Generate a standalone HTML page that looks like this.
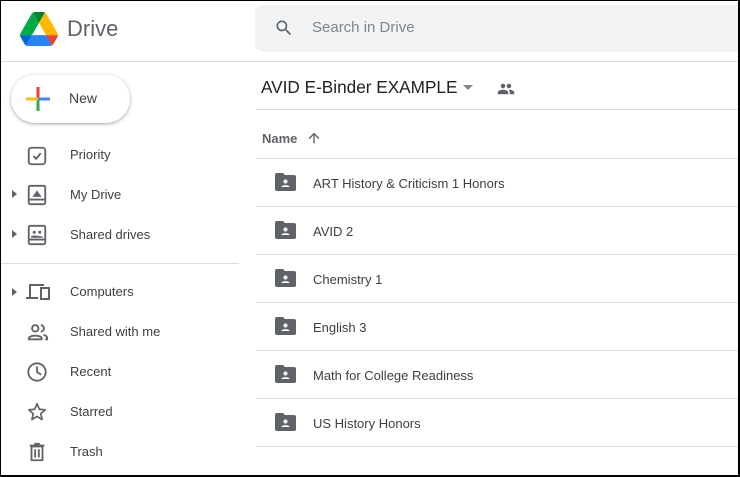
<!DOCTYPE html>
<html><head><meta charset="utf-8"><style>
*{margin:0;padding:0;box-sizing:border-box}
body{width:740px;height:477px;overflow:hidden;background:#fff;font-family:"Liberation Sans",Arial,sans-serif;position:relative}
.frame{position:absolute;left:0;top:0;width:740px;height:477px;border-left:1px solid #000;border-top:1px solid #000;border-right:2px solid #000;border-bottom:2px solid #000;pointer-events:none;z-index:10}
.abs{position:absolute}
.hline{position:absolute;height:1px;background:#dadce0}
.nav{position:absolute;left:70px;font-size:13px;color:#3c4043}
.ic{position:absolute;left:26px}
.tri{position:absolute;left:12px;width:0;height:0;border-top:4px solid transparent;border-bottom:4px solid transparent;border-left:5px solid #5f6368}
.row{position:absolute;left:313px;font-size:13px;color:#3c4043}
.fold{position:absolute;left:275px}
</style></head><body>
<div class="frame"></div>
<svg class="abs" style="left:20px;top:12px" width="38" height="34" viewBox="0 0 87.3 78"><path d="m6.6 66.85 3.850 6.650c.8 1.4 1.950 2.5 3.3 3.3l13.750-23.8h-27.5c0 1.550.4 3.1 1.2 4.5z" fill="#0066da"/><path d="m43.65 25-13.75-23.8c-1.35.8-2.5 1.9-3.3 3.3l-25.4 44a9.060 9.060 0 0 0 -1.2 4.5h27.5z" fill="#00ac47"/><path d="m73.55 76.8c1.35-.8 2.5-1.9 3.3-3.3l1.6-2.75 7.65-13.25c.8-1.4 1.2-2.95 1.2-4.5h-27.502l5.852 11.5z" fill="#ea4335"/><path d="m43.65 25 13.75-23.8c-1.35-.8-2.9-1.2-4.5-1.2h-18.5c-1.6 0-3.15.45-4.5 1.2z" fill="#00832d"/><path d="m59.8 53h-32.3l-13.75 23.8c1.35.8 2.9 1.2 4.5 1.2h50.8c1.6 0 3.15-.45 4.5-1.2z" fill="#2684fc"/><path d="m73.4 26.5-12.7-22c-.8-1.4-1.95-2.5-3.3-3.3l-13.75 23.8 16.15 28h27.45c0-1.55-.4-3.1-1.2-4.5z" fill="#ffba00"/></svg>
<div class="abs" style="left:67px;top:16px;font-size:22px;color:#5f6368">Drive</div>
<div class="abs" style="left:255px;top:5px;width:490px;height:47px;background:#f1f3f4;border-radius:8px"></div>
<svg class="abs" style="left:274px;top:18px" width="20" height="20" viewBox="0 0 24 24"><path d="M15.5 14h-.79l-.28-.27A6.470 6.470 0 0 0 16 9.5 6.5 6.5 0 1 0 9.5 16c1.610 0 3.090-.59 4.230-1.570l.27.28v.79l5 4.990L20.490 19l-4.990-5zm-6 0C7.010 14 5 11.990 5 9.5S7.010 5 9.5 5 14 7.010 14 9.5 11.990 14 9.5 14z" fill="#5f6368"/></svg>
<div class="abs" style="left:312px;top:19px;font-size:15px;color:#80868b">Search in Drive</div>
<div class="hline" style="left:0;top:61px;width:740px"></div>
<div class="abs" style="left:11px;top:75px;width:119px;height:48px;border-radius:24px;background:#fff;box-shadow:0 1px 2px rgba(60,64,67,.3),0 1px 4px 1px rgba(60,64,67,.15)"></div>
<svg class="abs" style="left:26px;top:87px" width="24" height="24" viewBox="0 0 24 24"><rect x="10.5" y="0" width="3" height="12" fill="#ea4335"/><rect x="12" y="10.5" width="12" height="3" fill="#4285f4"/><rect x="10.5" y="12" width="3" height="12" fill="#34a853"/><rect x="0" y="10.5" width="12" height="3" fill="#fbbc04"/></svg>
<div class="abs" style="left:69px;top:90px;font-size:14px;color:#3c4043">New</div>

<svg class="ic" style="top:145px" width="22" height="22" viewBox="0 0 24 24"><rect x="3" y="3" width="18" height="18" rx="3" fill="none" stroke="#5f6368" stroke-width="2"/><path d="M8 12l3 3 5-6" fill="none" stroke="#5f6368" stroke-width="2"/></svg>
<div class="nav" style="top:147px">Priority</div>
<div class="tri" style="top:190px"></div>
<svg class="ic" style="top:184px" width="22" height="22" viewBox="0 0 24 24"><rect x="3" y="2" width="18" height="20" rx="1.5" fill="none" stroke="#5f6368" stroke-width="2"/><path d="M7 14l5-7 5 7z" fill="#5f6368"/><path d="M3 17h18" stroke="#5f6368" stroke-width="2"/></svg>
<div class="nav" style="top:187px">My Drive</div>
<div class="tri" style="top:230px"></div>
<svg class="ic" style="top:224px" width="22" height="22" viewBox="0 0 24 24"><rect x="3" y="2" width="18" height="20" rx="1.5" fill="none" stroke="#5f6368" stroke-width="2"/><circle cx="9" cy="9" r="1.7" fill="#5f6368"/><circle cx="15" cy="9" r="1.7" fill="#5f6368"/><path d="M5.5 14c0-2 7-2 13 0v1h-13z" fill="#5f6368"/><path d="M3 17h18" stroke="#5f6368" stroke-width="2"/></svg>
<div class="nav" style="top:227px">Shared drives</div>
<div class="hline" style="left:0;top:263px;width:239px"></div>
<div class="tri" style="top:288px"></div>
<svg class="ic" style="top:281px" width="24" height="22" viewBox="0 0 24 22"><path d="M3 3h15v2H5v11H3z" fill="#5f6368"/><rect x="0" y="16" width="12" height="2" fill="#5f6368"/><rect x="15" y="7" width="8" height="11" fill="none" stroke="#5f6368" stroke-width="2"/></svg>
<div class="nav" style="top:284px">Computers</div>
<svg class="ic" style="top:321px" width="24" height="22" viewBox="0 0 24 24"><circle cx="9" cy="8" r="3.5" fill="none" stroke="#5f6368" stroke-width="2"/><path d="M2 19c0-4 14-4 14 0v1H2z" fill="none" stroke="#5f6368" stroke-width="2"/><path d="M15 4.5a3.5 3.5 0 0 1 0 7M18 15c2 .5 4 1.5 4 4v1h-2" fill="none" stroke="#5f6368" stroke-width="2"/></svg>
<div class="nav" style="top:324px">Shared with me</div>
<svg class="ic" style="top:361px" width="22" height="22" viewBox="0 0 24 24"><circle cx="12" cy="12" r="9.5" fill="none" stroke="#5f6368" stroke-width="2"/><path d="M12 6v6l4.5 3" fill="none" stroke="#5f6368" stroke-width="2"/></svg>
<div class="nav" style="top:364px">Recent</div>
<svg class="ic" style="top:401px" width="22" height="22" viewBox="0 0 24 24"><path d="M12 3l2.6 6 6.4.6-4.9 4.3 1.5 6.3L12 16.9 6.4 20.2l1.5-6.3L3 9.6 9.4 9z" fill="none" stroke="#5f6368" stroke-width="1.8" stroke-linejoin="round"/></svg>
<div class="nav" style="top:404px">Starred</div>
<svg class="ic" style="top:441px" width="22" height="22" viewBox="0 0 24 24"><path d="M6 6h12v15H6z" fill="none" stroke="#5f6368" stroke-width="2"/><path d="M4 5h16M9 3h6M10 9v9M14 9v9" stroke="#5f6368" stroke-width="2"/></svg>
<div class="nav" style="top:444px">Trash</div>

<div class="abs" style="left:261px;top:77px;font-size:17.2px;color:#202124">AVID E-Binder EXAMPLE</div>
<div class="abs" style="left:463px;top:85px;width:0;height:0;border-left:5px solid transparent;border-right:5px solid transparent;border-top:5px solid #80868b"></div>
<svg class="abs" style="left:497px;top:80px" width="18" height="18" viewBox="0 0 24 24"><path d="M16 11c1.66 0 2.99-1.34 2.99-3S17.66 5 16 5c-1.66 0-3 1.34-3 3s1.34 3 3 3zm-8 0c1.66 0 2.99-1.34 2.99-3S9.66 5 8 5C6.34 5 5 6.34 5 8s1.34 3 3 3zm0 2c-2.33 0-7 1.17-7 3.5V19h14v-2.5c0-2.33-4.67-3.5-7-3.5zm8 0c-.29 0-.62.02-.97.05 1.16.84 1.97 1.97 1.970 3.45V19h6v-2.5c0-2.33-4.67-3.5-7-3.5z" fill="#5f6368"/></svg>
<div class="hline" style="left:256px;top:109px;width:484px"></div>
<div class="abs" style="left:262px;top:131px;font-size:13px;font-weight:bold;color:#5f6368">Name</div>
<svg class="abs" style="left:306px;top:130px" width="16" height="16" viewBox="0 0 24 24"><path d="M4 12l1.41 1.41L11 7.83V20h2V7.83l5.58 5.59L20 12l-8-8-8 8z" fill="#5f6368"/></svg>
<div class="hline" style="left:256px;top:158px;width:484px"></div>

<svg class="fold" style="top:173px" width="21" height="18" viewBox="0 0 21 18"><path d="M0 2a2 2 0 0 1 2-2h6l2 2h9a2 2 0 0 1 2 2v12a2 2 0 0 1-2 2H2a2 2 0 0 1-2-2z" fill="#5f6368"/><circle cx="10.5" cy="8.5" r="2" fill="#fff"/><path d="M6.5 14c0-2.5 8-2.5 8 0z" fill="#fff"/></svg>
<div class="row" style="top:176px">ART History &amp; Criticism 1 Honors</div>
<div class="hline" style="left:256px;top:206px;width:484px"></div>
<svg class="fold" style="top:221px" width="21" height="18" viewBox="0 0 21 18"><path d="M0 2a2 2 0 0 1 2-2h6l2 2h9a2 2 0 0 1 2 2v12a2 2 0 0 1-2 2H2a2 2 0 0 1-2-2z" fill="#5f6368"/><circle cx="10.5" cy="8.5" r="2" fill="#fff"/><path d="M6.5 14c0-2.5 8-2.5 8 0z" fill="#fff"/></svg>
<div class="row" style="top:224px">AVID 2</div>
<div class="hline" style="left:256px;top:254px;width:484px"></div>
<svg class="fold" style="top:269px" width="21" height="18" viewBox="0 0 21 18"><path d="M0 2a2 2 0 0 1 2-2h6l2 2h9a2 2 0 0 1 2 2v12a2 2 0 0 1-2 2H2a2 2 0 0 1-2-2z" fill="#5f6368"/><circle cx="10.5" cy="8.5" r="2" fill="#fff"/><path d="M6.5 14c0-2.5 8-2.5 8 0z" fill="#fff"/></svg>
<div class="row" style="top:272px">Chemistry 1</div>
<div class="hline" style="left:256px;top:302px;width:484px"></div>
<svg class="fold" style="top:317px" width="21" height="18" viewBox="0 0 21 18"><path d="M0 2a2 2 0 0 1 2-2h6l2 2h9a2 2 0 0 1 2 2v12a2 2 0 0 1-2 2H2a2 2 0 0 1-2-2z" fill="#5f6368"/><circle cx="10.5" cy="8.5" r="2" fill="#fff"/><path d="M6.5 14c0-2.5 8-2.5 8 0z" fill="#fff"/></svg>
<div class="row" style="top:320px">English 3</div>
<div class="hline" style="left:256px;top:350px;width:484px"></div>
<svg class="fold" style="top:365px" width="21" height="18" viewBox="0 0 21 18"><path d="M0 2a2 2 0 0 1 2-2h6l2 2h9a2 2 0 0 1 2 2v12a2 2 0 0 1-2 2H2a2 2 0 0 1-2-2z" fill="#5f6368"/><circle cx="10.5" cy="8.5" r="2" fill="#fff"/><path d="M6.5 14c0-2.5 8-2.5 8 0z" fill="#fff"/></svg>
<div class="row" style="top:368px">Math for College Readiness</div>
<div class="hline" style="left:256px;top:398px;width:484px"></div>
<svg class="fold" style="top:413px" width="21" height="18" viewBox="0 0 21 18"><path d="M0 2a2 2 0 0 1 2-2h6l2 2h9a2 2 0 0 1 2 2v12a2 2 0 0 1-2 2H2a2 2 0 0 1-2-2z" fill="#5f6368"/><circle cx="10.5" cy="8.5" r="2" fill="#fff"/><path d="M6.5 14c0-2.5 8-2.5 8 0z" fill="#fff"/></svg>
<div class="row" style="top:416px">US History Honors</div>
<div class="hline" style="left:256px;top:446px;width:484px"></div>
</body></html>
